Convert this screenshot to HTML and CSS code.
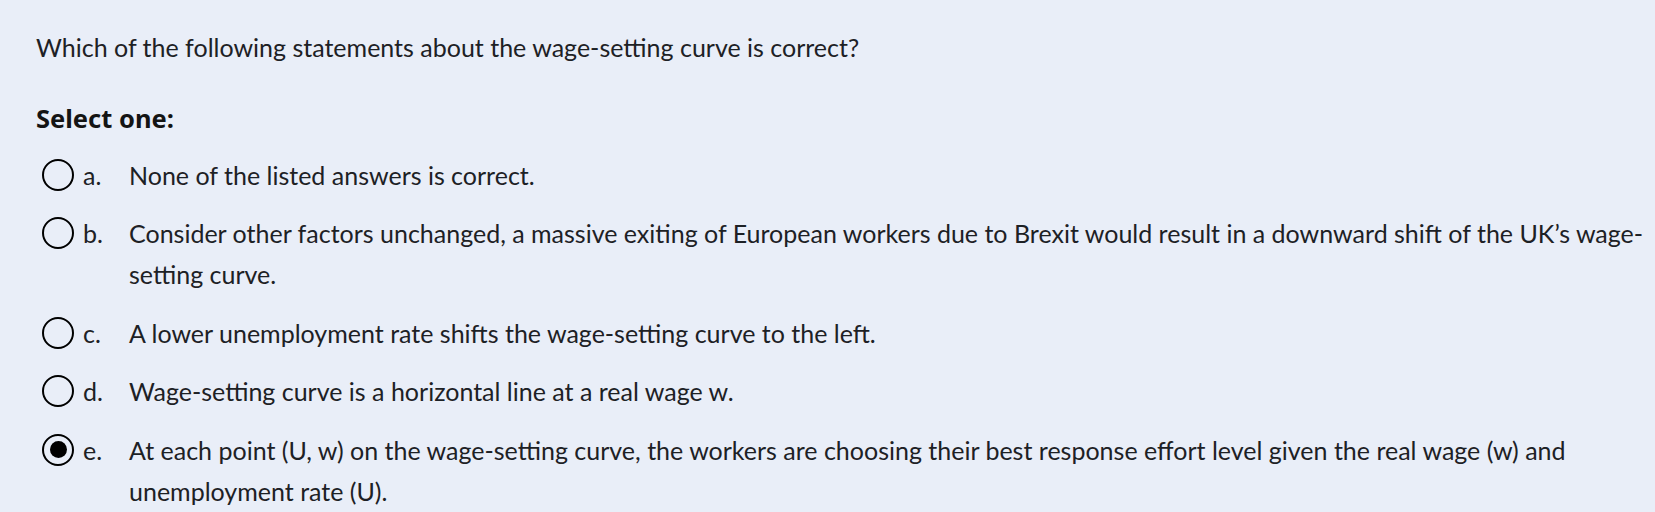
FILE: index.html
```html
<!DOCTYPE html>
<html lang="en">
<head>
<meta charset="utf-8">
<title>Question</title>
<link rel="stylesheet" href="styles.css">
</head>
<body>
<div class="que">
  <div class="qtext">Which of the following statements about the wage-setting curve is correct?</div>
  <div class="prompt">Select one:</div>
  <div class="answers">
    <div class="option">
      <span class="radio"></span>
      <span class="letter">a.</span>
      <span class="text">None of the listed answers is correct.</span>
    </div>
    <div class="option">
      <span class="radio"></span>
      <span class="letter">b.</span>
      <span class="text">Consider other factors unchanged, a massive exiting of European workers due to Brexit would result in a downward shift of the UK’s wage-setting curve.</span>
    </div>
    <div class="option">
      <span class="radio"></span>
      <span class="letter">c.</span>
      <span class="text">A lower unemployment rate shifts the wage-setting curve to the left.</span>
    </div>
    <div class="option">
      <span class="radio"></span>
      <span class="letter">d.</span>
      <span class="text">Wage-setting curve is a horizontal line at a real wage w.</span>
    </div>
    <div class="option">
      <span class="radio checked"><span class="dot"></span></span>
      <span class="letter">e.</span>
      <span class="text">At each point (U, w) on the wage-setting curve, the workers are choosing their best response effort level given the real wage (w) and unemployment rate (U).</span>
    </div>
  </div>
</div>
</body>
</html>
```
FILE: styles.css
```css
html, body {
  margin: 0;
  padding: 0;
  background: #e9eef8;
}

body {
  color: #1d2125;
  font-family: "Lato", "Noto Sans", sans-serif;
}

.que {
  padding: 29px 5px 0 36px;
}

.qtext {
  font-size: 25px;
  line-height: 37.5px;
}

.prompt {
  margin-top: 33px;
  font-family: "Noto Sans", "Lato", sans-serif;
  font-weight: 700;
  font-size: 25.5px;
  line-height: 37.5px;
  color: #141414;
}

.answers {
  margin-top: 17.7px;
  display: flex;
  flex-direction: column;
  gap: 17.5px;
}

.option {
  display: flex;
  align-items: flex-start;
  font-size: 25px;
  line-height: 41px;
}

.radio {
  flex: none;
  box-sizing: border-box;
  width: 32px;
  height: 32px;
  margin: 4px 0 0 6px;
  border: 2.8px solid #000;
  border-radius: 50%;
  display: flex;
  align-items: center;
  justify-content: center;
}

.dot {
  width: 17px;
  height: 17px;
  border-radius: 50%;
  background: #000;
}

.letter {
  flex: none;
  width: 46px;
  margin-left: 9px;
}

.text {
  flex: 1;
  min-width: 0;
}
```
